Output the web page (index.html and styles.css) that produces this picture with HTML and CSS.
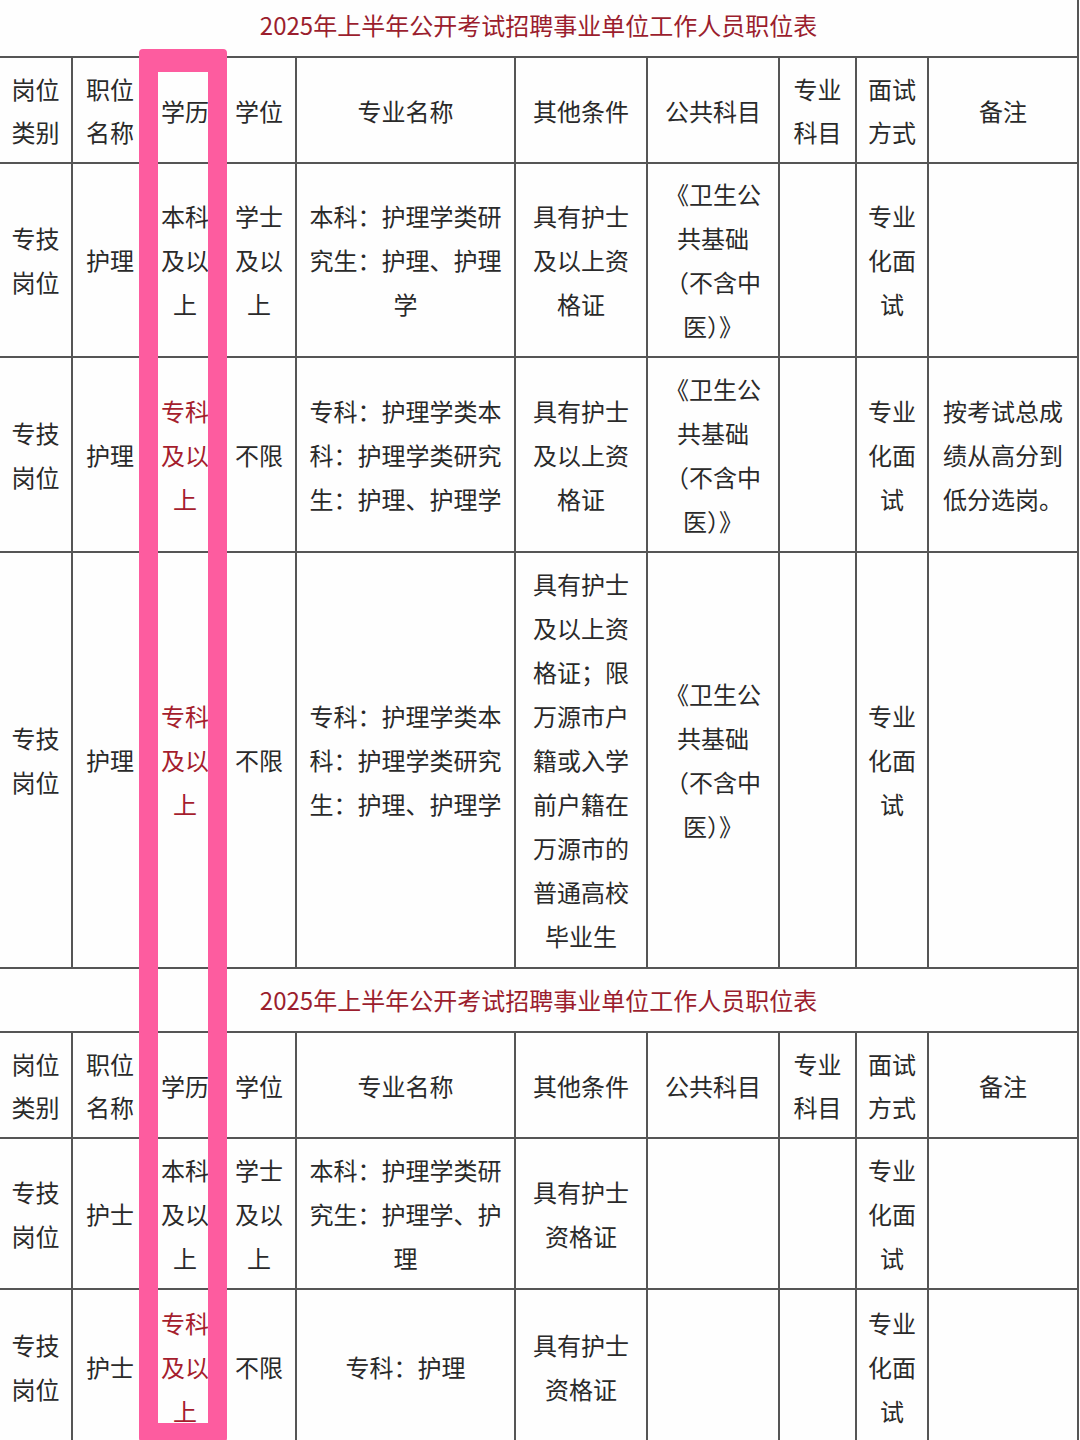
FILE: index.html
```html
<!DOCTYPE html>
<html lang="zh-CN">
<head>
<meta charset="utf-8">
<title>2025年上半年公开考试招聘事业单位工作人员职位表</title>
<link rel="stylesheet" href="styles.css">
</head>
<body>
<div class="page">
  <table class="jobs">
    <colgroup>
      <col class="c1"><col class="c2"><col class="c3"><col class="c4"><col class="c5">
      <col class="c6"><col class="c7"><col class="c8"><col class="c9"><col class="c10">
    </colgroup>
    <tbody>
      <tr class="r-title">
        <td colspan="10" class="title">2025年上半年公开考试招聘事业单位工作人员职位表</td>
      </tr>
      <tr class="r-head">
        <td class="first">岗位<br>类别</td>
        <td>职位<br>名称</td>
        <td>学历</td>
        <td>学位</td>
        <td>专业名称</td>
        <td>其他条件</td>
        <td>公共科目</td>
        <td>专业<br>科目</td>
        <td>面试<br>方式</td>
        <td>备注</td>
      </tr>
      <tr class="r1">
        <td class="first">专技<br>岗位</td>
        <td>护理</td>
        <td>本科<br>及以<br>上</td>
        <td>学士<br>及以<br>上</td>
        <td>本科：护理学类研<br>究生：护理、护理<br>学</td>
        <td>具有护士<br>及以上资<br>格证</td>
        <td>《卫生公<br>共基础<br>（不含中<br>医）》</td>
        <td></td>
        <td>专业<br>化面<br>试</td>
        <td></td>
      </tr>
      <tr class="r2">
        <td class="first">专技<br>岗位</td>
        <td>护理</td>
        <td class="red">专科<br>及以<br>上</td>
        <td>不限</td>
        <td>专科：护理学类本<br>科：护理学类研究<br>生：护理、护理学</td>
        <td>具有护士<br>及以上资<br>格证</td>
        <td>《卫生公<br>共基础<br>（不含中<br>医）》</td>
        <td></td>
        <td>专业<br>化面<br>试</td>
        <td>按考试总成<br>绩从高分到<br>低分选岗。</td>
      </tr>
      <tr class="r3">
        <td class="first">专技<br>岗位</td>
        <td>护理</td>
        <td class="red">专科<br>及以<br>上</td>
        <td>不限</td>
        <td>专科：护理学类本<br>科：护理学类研究<br>生：护理、护理学</td>
        <td>具有护士<br>及以上资<br>格证；限<br>万源市户<br>籍或入学<br>前户籍在<br>万源市的<br>普通高校<br>毕业生</td>
        <td>《卫生公<br>共基础<br>（不含中<br>医）》</td>
        <td></td>
        <td>专业<br>化面<br>试</td>
        <td></td>
      </tr>
      <tr class="r-title2">
        <td colspan="10" class="title">2025年上半年公开考试招聘事业单位工作人员职位表</td>
      </tr>
      <tr class="r-head">
        <td class="first">岗位<br>类别</td>
        <td>职位<br>名称</td>
        <td>学历</td>
        <td>学位</td>
        <td>专业名称</td>
        <td>其他条件</td>
        <td>公共科目</td>
        <td>专业<br>科目</td>
        <td>面试<br>方式</td>
        <td>备注</td>
      </tr>
      <tr class="r4">
        <td class="first">专技<br>岗位</td>
        <td>护士</td>
        <td>本科<br>及以<br>上</td>
        <td>学士<br>及以<br>上</td>
        <td>本科：护理学类研<br>究生：护理学、护<br>理</td>
        <td>具有护士<br>资格证</td>
        <td></td>
        <td></td>
        <td>专业<br>化面<br>试</td>
        <td></td>
      </tr>
      <tr class="r5">
        <td class="first">专技<br>岗位</td>
        <td>护士</td>
        <td class="red">专科<br>及以<br>上</td>
        <td>不限</td>
        <td>专科：护理</td>
        <td>具有护士<br>资格证</td>
        <td></td>
        <td></td>
        <td>专业<br>化面<br>试</td>
        <td></td>
      </tr>
    </tbody>
  </table>
  <div class="highlight" aria-hidden="true"></div>
</div>
</body>
</html>
```

FILE: styles.css
```css
html, body {
  margin: 0;
  padding: 0;
  background: #ffffff;
}

body {
  font-family: "Noto Sans CJK SC", "Noto Sans", "DejaVu Sans", sans-serif;
  color: #2a2a2a;
  overflow: hidden;
}

.page {
  position: relative;
  width: 1080px;
  height: 1440px;
  overflow: hidden;
  background: #fefefe;
}

.jobs {
  border-collapse: collapse;
  table-layout: fixed;
  width: 1078px;
  font-size: 24px;
  line-height: 44px;
}

.c1 { width: 72px; }
.c2 { width: 76px; }
.c3 { width: 74px; }
.c4 { width: 74px; }
.c5 { width: 219px; }
.c6 { width: 132px; }
.c7 { width: 132px; }
.c8 { width: 77px; }
.c9 { width: 72px; }
.c10 { width: 150px; }

.jobs td {
  border: 2px solid #555555;
  padding: 0;
  text-align: center;
  vertical-align: middle;
  white-space: nowrap;
}

.jobs td.first {
  border-left: none;
}

.jobs td.title {
  border-left: none;
  border-top: none;
  font-size: 24px;
  color: #9b1e2e;
  line-height: 34px;
}

.r-title { height: 57px; }
.r-title td { padding-bottom: 6px; }
.r-head { height: 106px; }
.r-head td { line-height: 43px; }
.r1 { height: 194px; }
.r2 { height: 195px; }
.r3 { height: 416px; }
.r-title2 { height: 64px; }
.r4 { height: 151px; }
.r5 { height: 156px; }

.jobs td.red {
  color: #a51d2d;
}

.highlight {
  position: absolute;
  left: 139px;
  top: 49px;
  width: 50px;
  height: 1351px;
  border-style: solid;
  border-color: #fd5c9f;
  border-width: 23px 19px 19px 19px;
  border-radius: 4px;
}
```
